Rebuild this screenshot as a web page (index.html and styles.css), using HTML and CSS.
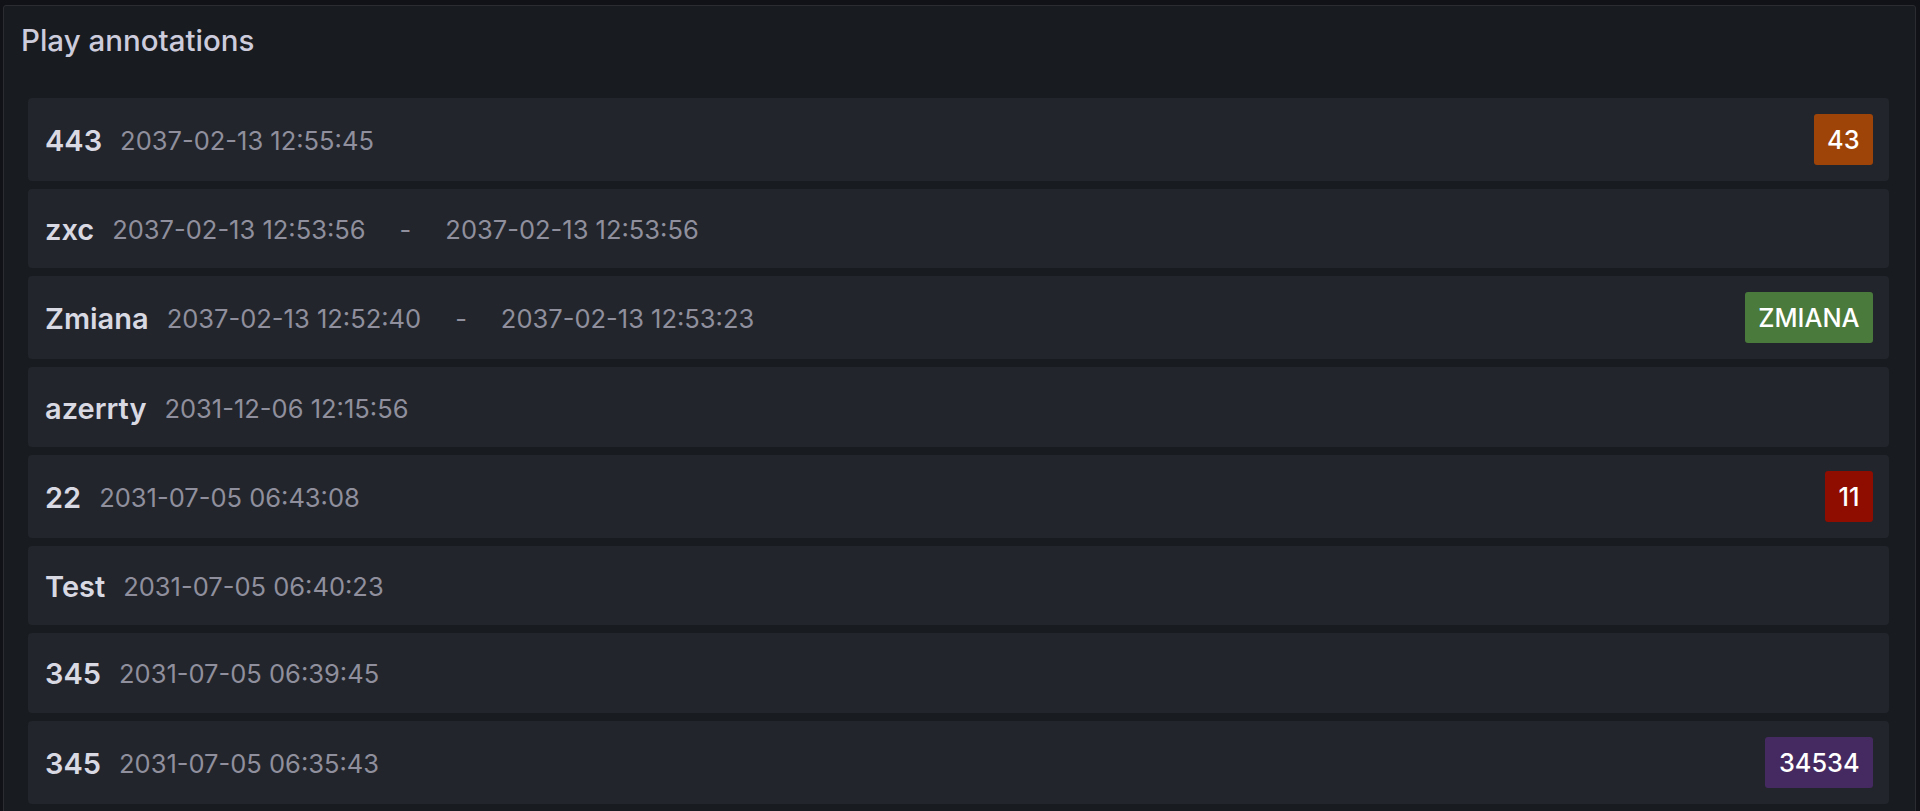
FILE: index.html
```html
<!DOCTYPE html>
<html lang="en">
<head>
<meta charset="utf-8">
<title>Play annotations</title>
<link rel="stylesheet" href="styles.css">
</head>
<body>
<section class="panel">
  <header class="panel-header"><h2 class="panel-title">Play annotations</h2></header>
  <ul class="anno-list">
    <li class="anno">
      <span class="anno-name">443</span>
      <span class="anno-time">2037-02-13 12:55:45</span>
      <span class="tags"><span class="tag tag-orange">43</span></span>
    </li>
    <li class="anno">
      <span class="anno-name">zxc</span>
      <span class="anno-time">2037-02-13 12:53:56</span>
      <span class="anno-sep">-</span>
      <span class="anno-time">2037-02-13 12:53:56</span>
    </li>
    <li class="anno">
      <span class="anno-name">Zmiana</span>
      <span class="anno-time">2037-02-13 12:52:40</span>
      <span class="anno-sep">-</span>
      <span class="anno-time">2037-02-13 12:53:23</span>
      <span class="tags"><span class="tag tag-green">ZMIANA</span></span>
    </li>
    <li class="anno">
      <span class="anno-name">azerrty</span>
      <span class="anno-time">2031-12-06 12:15:56</span>
    </li>
    <li class="anno">
      <span class="anno-name">22</span>
      <span class="anno-time">2031-07-05 06:43:08</span>
      <span class="tags"><span class="tag tag-red">11</span></span>
    </li>
    <li class="anno">
      <span class="anno-name">Test</span>
      <span class="anno-time">2031-07-05 06:40:23</span>
    </li>
    <li class="anno">
      <span class="anno-name">345</span>
      <span class="anno-time">2031-07-05 06:39:45</span>
    </li>
    <li class="anno">
      <span class="anno-name">345</span>
      <span class="anno-time">2031-07-05 06:35:43</span>
      <span class="tags"><span class="tag tag-purple">34534</span></span>
    </li>
  </ul>
</section>
</body>
</html>
```
FILE: styles.css
```css
* { box-sizing: border-box; }
html, body { height: 100%; }
body {
  margin: 0;
  padding: 5px 4px 0 3px;
  background: #111217;
  font-family: Inter, "Noto Sans", "Liberation Sans", sans-serif;
  overflow: hidden;
}
.panel {
  height: 830px;
  background: #181b1f;
  border: 1px solid #2a2c32;
  border-radius: 3px;
}
.panel-header {
  height: 69px;
  display: flex;
  align-items: center;
  padding: 0 17px;
}
.panel-title {
  margin: 0;
  font-size: 29.5px;
  font-weight: 500;
  color: #ccccdc;
  line-height: 1.2;
}
.anno-list {
  list-style: none;
  margin: 0;
  padding: 23px 26px 0 24px;
  display: flex;
  flex-direction: column;
  gap: 8px;
}
.anno {
  display: flex;
  align-items: center;
  min-height: 79.4px;
  padding: 16px 16px 16px 17px;
  background: #22252b;
  border-radius: 4px;
}
.anno-name {
  font-size: 29px;
  font-weight: 600;
  color: #d8d9e3;
  line-height: 44px;
  padding-top: 3px;
  margin-right: 18px;
}
.anno-time {
  font-size: 25.5px;
  font-weight: 400;
  color: #8f8f9d;
  line-height: 44px;
  padding-top: 3px;
}
.anno-sep {
  font-size: 25.5px;
  color: #8f8f9d;
  line-height: 44px;
  padding-top: 3px;
  margin: 0 34px;
}
.tags {
  margin-left: auto;
  display: flex;
  gap: 8px;
}
.tag {
  display: flex;
  align-items: center;
  height: 51px;
  padding: 0 13.5px;
  border-radius: 3px;
  font-size: 25.3px;
  font-weight: 500;
  color: #ffffff;
}
.tag-orange { background: #9f4408; }
.tag-green { background: #4a7a3c; }
.tag-red { background: #8f0d00; }
.tag-purple { background: #452a61; }
```
